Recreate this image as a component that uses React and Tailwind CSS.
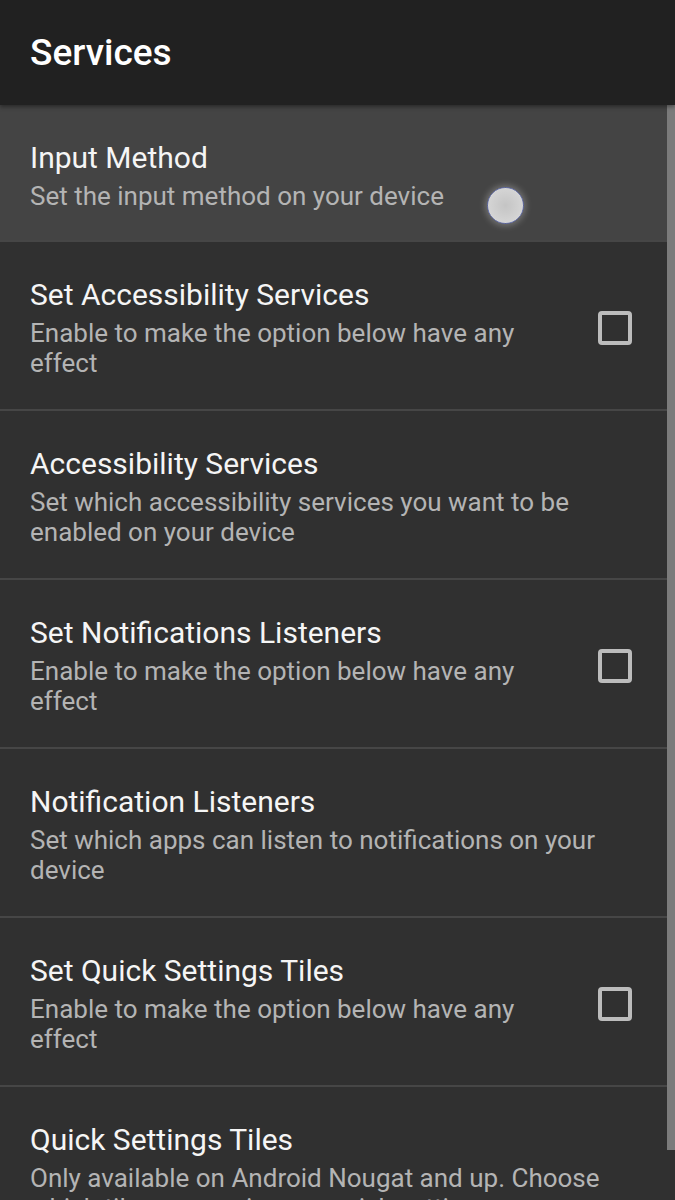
import React from "react";

const items = [
  { title: "Input Method", summary: "Set the input method on your device", active: true },
  { title: "Set Accessibility Services", summary: "Enable to make the option below have any effect", check: true },
  { title: "Accessibility Services", summary: "Set which accessibility services you want to be enabled on your device" },
  { title: "Set Notifications Listeners", summary: "Enable to make the option below have any effect", check: true },
  { title: "Notification Listeners", summary: "Set which apps can listen to notifications on your device" },
  { title: "Set Quick Settings Tiles", summary: "Enable to make the option below have any effect", check: true },
  { title: "Quick Settings Tiles", summary: "Only available on Android Nougat and up. Choose which tiles appear in your quick settings menu" },
];

function Row({ item }) {
  return (
    <div
      className={
        "relative flex items-center border-b-2 border-[#464646] pl-[30px] pr-[43px] pt-[35px] " +
        (item.active ? "bg-[#444444] pb-[29px]" : "pb-[31px]")
      }
    >
      <div className={"flex-1 min-w-0 " + (item.check ? "pr-[40px]" : "pr-0")}>
        <div className="text-[30px] leading-[35px] text-[#f5f5f5]">{item.title}</div>
        <div className="mt-[6px] text-[26px] leading-[30px] text-[#b4b4b4]">{item.summary}</div>
      </div>
      {item.check && (
        <div className="w-[34px] h-[34px] shrink-0 rounded-[4px] border-[4px] border-[#bcbcbc]" />
      )}
      {item.active && (
        <div className="absolute left-[487px] top-[82px] w-[37px] h-[37px] rounded-full border border-[#6670a8] bg-[radial-gradient(circle,#c4c4c4,#dcdcdc)] shadow-[0_0_6px_2px_rgba(255,255,255,0.25)]" />
      )}
    </div>
  );
}

export default function App() {
  return (
    <div className="relative w-[675px] h-[1200px] overflow-hidden bg-[#303030] font-['Roboto',sans-serif]">
      <div className="h-[105px] bg-[#212121] flex items-center px-[30px] shadow-[0_2px_4px_rgba(0,0,0,0.4)] relative z-10">
        <h1 className="text-[37px] font-medium text-white">Services</h1>
      </div>
      {items.map((item) => (
        <Row key={item.title} item={item} />
      ))}
      <div className="absolute right-0 top-[105px] w-[8px] h-[1045px] bg-[#7b7b7b]" />
    </div>
  );
}
